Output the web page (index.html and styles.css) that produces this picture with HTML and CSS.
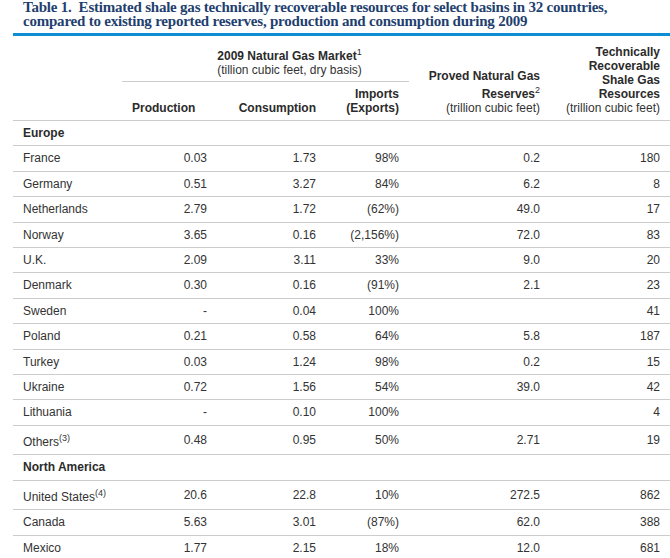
FILE: index.html
```html
<!DOCTYPE html>
<html>
<head>
<meta charset="utf-8">
<title>Table 1</title>
<link rel="stylesheet" href="styles.css">
</head>
<body>
<div class="page">
  <h1 class="title"><span class="tline">Table 1.&nbsp; Estimated shale gas technically recoverable resources for select basins in 32 countries,</span><span class="tline">compared to existing reported reserves, production and consumption during 2009</span></h1>
  <table class="data">
    <colgroup>
      <col class="c-name">
      <col class="c-prod">
      <col class="c-cons">
      <col class="c-imp">
      <col class="c-res">
      <col class="c-shale">
    </colgroup>
    <thead>
      <tr class="hrow1">
        <th class="blank"></th>
        <th colspan="3" class="market">2009 Natural Gas Market<sup>1</sup><br><span class="unit">(tillion cubic feet, dry basis)</span></th>
        <th rowspan="2" class="span2">Proved Natural Gas<br>Reserves<sup class="tall">2</sup><br><span class="unit">(trillion cubic feet)</span></th>
        <th rowspan="2" class="span2">Technically<br>Recoverable<br>Shale Gas<br>Resources<br><span class="unit">(trillion cubic feet)</span></th>
      </tr>
      <tr class="hrow2">
        <th></th>
        <th class="prod">Production</th>
        <th>Consumption</th>
        <th>Imports<br>(Exports)</th>
      </tr>
    </thead>
    <tbody>
      <tr class="region"><td colspan="6">Europe</td></tr>
      <tr><td class="name">France</td><td>0.03</td><td>1.73</td><td>98%</td><td>0.2</td><td>180</td></tr>
      <tr><td class="name">Germany</td><td>0.51</td><td>3.27</td><td>84%</td><td>6.2</td><td>8</td></tr>
      <tr><td class="name">Netherlands</td><td>2.79</td><td>1.72</td><td>(62%)</td><td>49.0</td><td>17</td></tr>
      <tr><td class="name">Norway</td><td>3.65</td><td>0.16</td><td>(2,156%)</td><td>72.0</td><td>83</td></tr>
      <tr><td class="name">U.K.</td><td>2.09</td><td>3.11</td><td>33%</td><td>9.0</td><td>20</td></tr>
      <tr><td class="name">Denmark</td><td>0.30</td><td>0.16</td><td>(91%)</td><td>2.1</td><td>23</td></tr>
      <tr><td class="name">Sweden</td><td>-</td><td>0.04</td><td>100%</td><td></td><td>41</td></tr>
      <tr><td class="name">Poland</td><td>0.21</td><td>0.58</td><td>64%</td><td>5.8</td><td>187</td></tr>
      <tr><td class="name">Turkey</td><td>0.03</td><td>1.24</td><td>98%</td><td>0.2</td><td>15</td></tr>
      <tr><td class="name">Ukraine</td><td>0.72</td><td>1.56</td><td>54%</td><td>39.0</td><td>42</td></tr>
      <tr><td class="name">Lithuania</td><td>-</td><td>0.10</td><td>100%</td><td></td><td>4</td></tr>
      <tr><td class="name">Others<sup class="tall">(3)</sup></td><td>0.48</td><td>0.95</td><td>50%</td><td>2.71</td><td>19</td></tr>
      <tr class="region"><td colspan="6">North America</td></tr>
      <tr><td class="name">United States<sup class="tall">(4)</sup></td><td>20.6</td><td>22.8</td><td>10%</td><td>272.5</td><td>862</td></tr>
      <tr><td class="name">Canada</td><td>5.63</td><td>3.01</td><td>(87%)</td><td>62.0</td><td>388</td></tr>
      <tr><td class="name">Mexico</td><td>1.77</td><td>2.15</td><td>18%</td><td>12.0</td><td>681</td></tr>
    </tbody>
  </table>
</div>
</body>
</html>
```

FILE: styles.css
```css
html, body {
  margin: 0;
  padding: 0;
  background: #ffffff;
}

body {
  font-family: "Liberation Sans", Arial, sans-serif;
  color: #333333;
}

.page {
  padding-left: 13px;
}

.title {
  margin: 0;
  width: 647px;
  padding: 0 0 5px 10px;
  font-family: "Liberation Serif", "Times New Roman", serif;
  font-weight: bold;
  font-size: 15px;
  line-height: 14px;
  letter-spacing: -0.22px;
  color: #1f3f6f;
  border-bottom: 3px solid #0e8fd3;
  white-space: nowrap;
}

.tline {
  display: block;
  height: 14px;
}

.data {
  width: 657px;
  table-layout: fixed;
  border-collapse: collapse;
  font-size: 12px;
}

.c-name { width: 109px; }
.c-prod { width: 95px; }
.c-cons { width: 109px; }
.c-imp { width: 83px; }
.c-res { width: 141px; }
.c-shale { width: 120px; }

.data th,
.data td {
  padding: 5px 10px;
  line-height: 14.4px;
  text-align: right;
  border-bottom: 1px solid #cccccc;
  white-space: nowrap;
}

.data th {
  font-weight: bold;
  color: #2b2b2b;
  vertical-align: bottom;
  line-height: 14px;
}

.data .unit {
  font-weight: normal;
  color: #333333;
}

.data sup {
  font-size: 9px;
  font-weight: normal;
  line-height: 0;
}

.data sup.tall {
  line-height: 14px;
}

.hrow1 .blank {
  border-bottom: none;
  padding: 0;
}

.hrow1 .market {
  text-align: center;
  padding: 13px 0 4px 48px;
}

.hrow2 th {
  padding: 5px 10px 5px;
}

.hrow2 .prod {
  padding-right: 24px;
}

.data th.span2 {
  padding: 0 10px 5px;
}

.data td.name {
  text-align: left;
}

.region td {
  text-align: left;
  font-weight: bold;
  color: #2b2b2b;
}
```
